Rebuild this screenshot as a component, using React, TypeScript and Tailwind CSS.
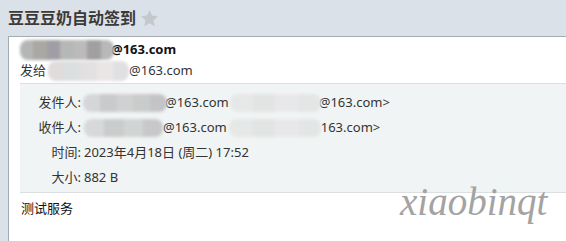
import React from "react";

const font = { fontFamily: '"Noto Sans", "Noto Sans CJK SC", sans-serif' };

function Blur({ w, colors, h = 18 }: { w: number; colors: string[]; h?: number }) {
  return (
    <span
      className="inline-flex overflow-hidden rounded-[8px] blur-[1.5px] align-middle"
      style={{ width: w, height: h }}
    >
      {colors.map((c, i) => (
        <span key={i} className="flex-1 h-full" style={{ background: c }} />
      ))}
    </span>
  );
}

export default function App() {
  return (
    <div
      className="w-[566px] h-[241px] bg-[#dbe1e8] flex flex-col overflow-hidden text-[#333]"
      style={font}
    >
      <div className="h-[36px] flex items-center pl-[8px] shrink-0">
        <span className="text-[16px] font-bold text-[#3a3a3a] leading-none">豆豆豆奶自动签到</span>
        <svg width="21" height="21" viewBox="0 0 24 24" className="ml-[3px]">
          <path
            d="M12 2.5l2.9 6.2 6.8.8-5 4.6 1.3 6.7L12 17.5l-6 3.3 1.3-6.7-5-4.6 6.8-.8z"
            fill="#c3c8cd"
          />
        </svg>
      </div>
      <div className="flex-1 ml-[8px] bg-white border-t border-l border-[#a3abb3] relative">
        <div className="pl-[11px] pt-[3px] h-[46px]">
          <div className="h-[20px] flex items-center text-[13px] font-bold text-[#111]">
            <Blur w={94} h={20} colors={["#b4b6b6", "#aaa8a2", "#a09ea4", "#b6b8b6", "#bcbaba", "#a0a0a2", "#b8b8b8"]} />
            <span className="-ml-[3px]">@163.com</span>
          </div>
          <div className="h-[22px] flex items-center text-[13px] text-[#333]">
            <span>发给</span>
            <span className="ml-[2px]">
              <Blur w={81} h={20} colors={["#e0dcdc", "#dcdfe0", "#e2e0e0", "#eae6e6", "#e0e0e2"]} />
            </span>
            <span>@163.com</span>
          </div>
        </div>
        <div className="ml-[11px] bg-[#f1f4f4] border-t border-b border-[#dbdfdf] h-[110px] pt-[6px] text-[13px] text-[#333]">
          <div className="h-[25px] flex items-center">
            <span className="w-[61px] text-right">发件人:</span>
            <span className="ml-[2px]"><Blur w={84} colors={["#d4d6d8", "#c8cacc", "#d0d2d2", "#cacccc", "#c4c4c6"]} /></span>
            <span className="-ml-[2px]">@163.com</span>
            <span className="ml-[1px]"><Blur w={91} colors={["#e6e8e8", "#e2e4e4", "#e8e8ea", "#e4e6e6"]} /></span>
            <span className="-ml-[2px]">@163.com&gt;</span>
          </div>
          <div className="h-[25px] flex items-center">
            <span className="w-[61px] text-right">收件人:</span>
            <span className="ml-[3px]"><Blur w={79} colors={["#d6d8da", "#cacccc", "#d2d4d4", "#c8c8ca"]} /></span>
            <span>@163.com</span>
            <span className="ml-[2px]"><Blur w={92} colors={["#e6e8e8", "#e2e4e4", "#e8e8ea", "#e4e6e6"]} /></span>
            <span>163.com&gt;</span>
          </div>
          <div className="h-[25px] flex items-center">
            <span className="w-[61px] text-right">时间:</span>
            <span className="ml-[3px]">2023年4月18日 (周二) 17:52</span>
          </div>
          <div className="h-[25px] flex items-center">
            <span className="w-[61px] text-right">大小:</span>
            <span className="ml-[3px]">882 B</span>
          </div>
        </div>
        <div className="pl-[12px] pt-[6px] text-[13px] text-[#111]">测试服务</div>
        <span
          className="absolute left-[391px] top-[145px] text-[39px] italic text-[#a3a3a3] leading-none"
          style={{ fontFamily: '"Liberation Serif", serif' }}
        >
          xiaobinqt
        </span>
      </div>
    </div>
  );
}
